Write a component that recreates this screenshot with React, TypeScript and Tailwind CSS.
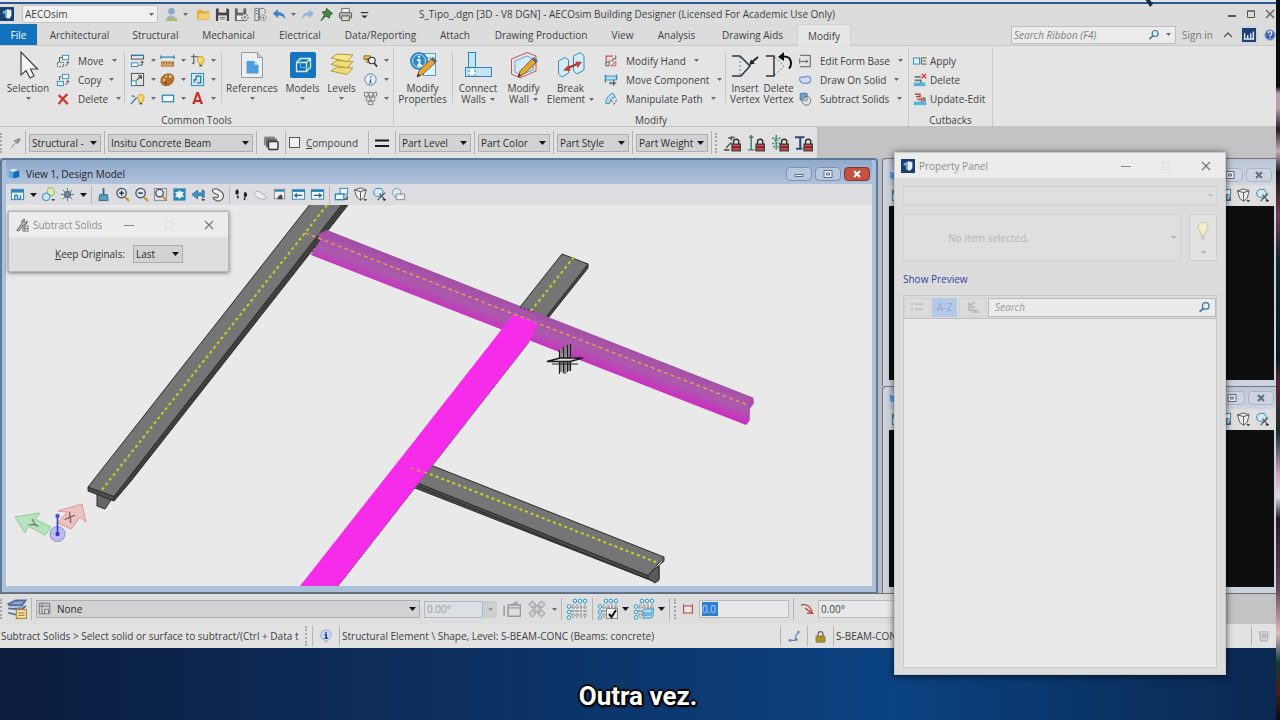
import type { ReactNode } from "react";

/* ---------- small building blocks ---------- */

const Svg = ({ s = 16, children }: { s?: number; children: ReactNode }) => (
  <svg width={s} height={s} viewBox={`0 0 ${s} ${s}`} fill="none" className="shrink-0" aria-hidden="true">{children}</svg>
);

const Caret = ({ dark = false }: { dark?: boolean }) => (
  <svg width={dark ? 7 : 5} height={dark ? 4 : 3} viewBox="0 0 6 4" preserveAspectRatio="none" className="shrink-0" aria-hidden="true">
    <path d="M0 0H6L3 4Z" fill={dark ? "#151515" : "#6b6b6b"} />
  </svg>
);

const Sep = () => <div className="w-px shrink-0 self-stretch bg-[#b4b4b4]" />;
const Grip = () => <div className="h-5 w-[3px] shrink-0 border-l-2 border-dotted border-[#a5a5a5]" />;

function Picker({ label, value, className, icon }: { label: string; value: string; className: string; icon?: ReactNode }) {
  return (
    <div className={`relative h-[18px] shrink-0 ${className}`}>
      <select aria-label={label} className={`block h-full w-full appearance-none border border-[#adadad] bg-[#d2d2d2] ${icon ? "pl-5" : "pl-0.5"} pr-3 text-[10px] leading-4 text-[#2b2b2b]`}>
        <option>{value}</option>
      </select>
      {icon && <span className="pointer-events-none absolute left-0.5 top-0.5">{icon}</span>}
      <span className="pointer-events-none absolute inset-y-0 right-1 flex items-center"><Caret dark /></span>
    </div>
  );
}

/* ---------- 16px icons ---------- */

const B = "#2a86b8";
const K = "#4a4a4a";

const lockBody = (
  <>
    <path d="M10 10V7.500a2.500 2.500 0 0 1 5 0V10" stroke="#333" strokeWidth="1.400" />
    <rect x="8.500" y="9.500" width="8" height="6.500" fill="#b9484c" stroke="#333" />
    <path d="M8.500 12.500h8" stroke="#5a2024" />
  </>
);

const gridBase = (
  <>
    <path d="M7 6v15M11 6v15M15 6v15M19 6v15M5 9h16M5 13h16M5 17h16" stroke="#888" strokeDasharray="2 1" />
    <g stroke="#2b95cf" fill="#e8f4fb">
      <circle cx="9" cy="3" r="1.800" /><circle cx="14" cy="3" r="1.800" /><circle cx="19" cy="3" r="1.800" />
      <circle cx="3" cy="8.500" r="1.800" /><circle cx="3" cy="14" r="1.800" /><circle cx="3" cy="19.500" r="1.800" />
    </g>
  </>
);

const bulb = (
  <>
    <path d="M11.500 3.500a3.700 3.700 0 0 1 2 6.700V12h-4v-1.800a3.700 3.700 0 0 1 2-6.700Z" fill="#f7d774" stroke="#d79b1e" />
    <path d="M10 13.500h3" stroke="#555" strokeWidth="1.500" />
  </>
);

const icons: Record<string, ReactNode> = {
  logo: <><rect width="16" height="16" fill="#15406f" /><path d="M3 5 8 2.500V13L5.500 11.500V7L3 8Z" fill="#7fa8d6" /><path d="M8 2.500 13 3.500V10L11 13H8Z" fill="#e9f0f8" /></>,
  user: <><circle cx="8" cy="4.500" r="3.500" fill="#8aa9cc" /><path d="M2 15c0-8 11-8 11 0Z" fill="#9ab6d4" /><path d="M1 15c2-4 6-4 13-3v3Z" fill="#a9bd6a" /></>,
  folder: <><path d="M1 5q0-2 2-2h3l1.500 1.500H13q1.500 0 1.500 2V12q0 1.500-1.500 1.500H3Q1 13.500 1 12Z" fill="#e2ab3b" /><path d="M3 7h12l-1.500 6H3Z" fill="#f3cf73" /></>,
  save: <><path d="M1 1.500h13L15 3v12H1Z" fill="#444" /><rect x="4" y="1" width="8" height="5" fill="#dcdcdc" /><rect x="3.500" y="9" width="9" height="6" fill="#efefef" /><path d="M5 11h6M5 13h6" stroke="#666" /></>,
  saveCog: <><path d="M1 1.500h12V15H1Z" fill="#666" /><rect x="4" y="1" width="6" height="5" fill="#dcdcdc" /><rect x="3" y="9" width="6" height="5" fill="#efefef" /><circle cx="11.500" cy="11" r="3.500" fill="#ddd" stroke="#555" strokeDasharray="2 1" /><circle cx="11.500" cy="11" r="1.200" fill="#666" /></>,
  docCog: <><path d="M2 1.500h4v13H2ZM7 1.500h4l2 2V7M7 2v12" stroke="#777" /><path d="M3 4h2M3 7h2" stroke="#2a86b8" /><circle cx="11" cy="11.500" r="3" fill="#ddd" stroke="#666" strokeDasharray="2 1" /><circle cx="11" cy="11.500" r="1" fill="#666" /></>,
  undo: <path d="M1 7 6.500 2.500V5.500C11 5.500 14 8 14 13 12 9.500 9.500 9 6.500 9v3Z" fill="#3c82c8" />,
  redo: <path d="M15 7 9.500 2.500V5.500C5 5.500 2 8 2 13 4 9.500 6.500 9 9.500 9v3Z" fill="#8fb6dc" />,
  pin: <><path d="M8 1.500 14.500 7 12 8 11 12 7.500 9.500 2 14.500 6 8.500 3.500 5.500 7.500 4.500Z" fill="#3f8a47" stroke="#2b5c32" /></>,
  printer: <><path d="M4 6V1.500h8V6" stroke="#666" fill="#eee" /><rect x="1.500" y="6" width="13" height="6" rx="1" fill="#b6b6b6" stroke="#555" /><rect x="4" y="9.500" width="8" height="5" fill="#cfe3c0" stroke="#555" /></>,
  more: <><path d="M4 6h8" stroke="#333" strokeWidth="1.300" /><path d="M4.500 9h7L8 12Z" fill="#333" /></>,
  move: <><rect x="7.500" y="1.500" width="7" height="5" stroke={B} fill="#f4fafc" /><rect x="1.500" y="9.500" width="7" height="5" stroke={K} strokeDasharray="2 1" /><path d="M4 9V4h3M10.500 13c2.500 0 3-1.500 3-4M12 10.500 13.500 8.500 15 10.500" stroke={K} /></>,
  copy: <><rect x="7.500" y="1.500" width="7" height="5" stroke={B} fill="#f4fafc" /><rect x="1.500" y="9.500" width="7" height="5" stroke={B} fill="#dff0f7" /><path d="M4 8V4h2M10.500 13c2.500 0 3-1.500 3-4M12 10.500 13.500 8.500 15 10.500" stroke={K} /></>,
  del: <path d="M3 3.500C6 6 10 10 13.500 14M13 2.500C9 6 5.500 10 3 14" stroke="#cf3530" strokeWidth="2.600" />,
  stretch: <><rect x="1.500" y="2.500" width="13" height="4" stroke={K} /><path d="M2 2.500h12" stroke={B} strokeWidth="1.500" /><rect x="1.500" y="10.500" width="7" height="4" stroke={B} fill="#fff" /><path d="M10 13h3V9M11.500 10.500 13 8.500l1.500 2" stroke={K} /></>,
  measure: <><path d="M1 4.500h14M1 2.500v4M15 2.500v4" stroke={B} strokeWidth="1.300" /><rect x="1.500" y="9.500" width="13" height="4.500" fill="#d9a86c" stroke="#a97534" /><path d="M4 10v2M7 10v2M10 10v2M13 10v2" stroke="#8a5c22" /></>,
  snapBulb: <><path d="M4 1v11M1 4h8M2 12l3-3" stroke={K} />{bulb}</>,
  scale: <><rect x="1.500" y="1.500" width="13" height="13" stroke={K} /><rect x="1.500" y="9.500" width="5" height="5" stroke={B} fill="#fff" /><path d="M7 9l5-5M8.500 4H12v3.500" stroke={K} strokeWidth="1.300" /></>,
  palette: <><path d="M9 2c5 0 6 3 5.500 6S11 14.500 6.500 14.500C3 14.500 1 12.500 1 9.500 1 5 5 2 9 2Z" fill="#b9702a" stroke="#8f531a" /><circle cx="11" cy="4.800" r="1.400" fill="#e8e8e8" /><circle cx="6.500" cy="5" r="1.200" fill="#f0c05a" /><circle cx="4" cy="8.500" r="1.200" fill="#efe2b8" /><circle cx="6" cy="11.500" r="1.200" fill="#6d3a0e" /></>,
  offset: <><rect x="1.500" y="1.500" width="13" height="13" fill="#cfe9f5" stroke={B} /><path d="M4.500 11.500v-3h2v-4h5v7H7.500" stroke="#246e97" strokeWidth="1.300" /></>,
  wandBulb: <><path d="M1 14 7 7M2 5l3 1" stroke="#4481b8" strokeWidth="1.600" />{bulb}</>,
  fence: <><rect x="2.500" y="4.500" width="12" height="7" fill="#eef8fc" stroke={B} strokeWidth="1.300" /></>,
  search3: <><path d="M1 3h7v4H1ZM4 6h6v4H4Z" fill="#edbb56" stroke="#9a6b1b" /><circle cx="9.500" cy="8" r="3.500" fill="#e7eef4" stroke="#333" strokeWidth="1.200" /><path d="M12 11l3 3.500" stroke="#333" strokeWidth="1.800" /></>,
  info: <><circle cx="8" cy="8" r="6" fill="#e8effa" stroke="#4d76bb" /><path d="M8.500 4.500v1.500M8.300 7.500 7.500 11.500h1.500" stroke="#2f5fae" strokeWidth="1.400" /></>,
  infoDrop: <><path d="M8 1a6 6 0 0 1 2 11.600L8 15.500 6 12.600A6 6 0 0 1 8 1Z" fill="#c9d8ee" stroke="#8ea6c8" /><path d="M8 3.500V5M6.500 6.500H8.200V10.500M6.500 10.500H10" stroke="#123b86" strokeWidth="1.600" /></>,
  keyboard: <><path d="M1.500 1.500h4v4h-4ZM6.500 1.500h4v4h-4ZM11.500 1.500h3v4h-3ZM3.500 6.500h4v4h-4ZM8.500 6.500h4v4h-4ZM5.500 11.500h5v3h-5Z" stroke="#777" fill="#eee" /></>,
  hand: <><path d="M2 2.500h8M2.500 2v7" stroke="#c0504d" strokeWidth="1.300" /><path d="M2 13.500V9.500h4v4ZM9.500 5.500h4V1.500" stroke={K} /><path d="M8 13.500h5.500v-5ZM5 8h6l-1.500-2" stroke="#c0504d" fill="#f3d4d2" /></>,
  moveComp: <><path d="M1.500 2v9M14.500 2v6" stroke={B} strokeWidth="1.400" /><rect x="2" y="3.500" width="12" height="4.500" fill="#b7dcee" stroke={B} /><path d="M11 8.500v6M8 11.500h6M7 10v3" stroke={K} strokeWidth="1.300" /></>,
  path: <><path d="M2 13C2 7 6 2.500 10.500 1.500L13 6C9 6.500 7 9 6.500 13Z" fill="#b9d9ec" stroke={B} /><path d="M8 9.500l4 4M14 8.500c0 3-1.500 5-4 6" stroke={K} strokeDasharray="3 1" /></>,
  formBase: <><path d="M2 1.500h12v13H2" stroke={K} /><path d="M3 8.500h8M9 6.500l2 2-2 2M2 5v6" stroke={K} /></>,
  drawSolid: <path d="M2 8C1 5 4 3.500 7 5c2-2 7-1.500 7.500 1 .5 3-1 5.500-4 5.500C7 12.500 3 11.500 2 8Z" fill="#cfdcf2" stroke="#6f8fc6" strokeWidth="1.400" />,
  subSolid: <><rect x="2.500" y="1.500" width="8" height="8" rx="1" fill="#6fa4d8" stroke="#3b6ea4" /><circle cx="9.500" cy="10" r="5" fill="#e4e4e4" stroke="#666" /><path d="M6 6.500h4.500V10H6Z" fill="#b6cfe8" stroke="#888" /></>,
  apply: <><rect x="0.500" y="4.500" width="7" height="7" fill="#d6ecf6" stroke={B} /><path d="M9.500 4.500h6M9.500 11.500h6M9.500 4.500v7M11 8h4" stroke={K} /></>,
  cutDel: <><path d="M2 4.500h7M2 8.500h7v3" stroke="#777" strokeWidth="2" /><rect x="1" y="11" width="13" height="4" fill="#54b4de" /><path d="M10 1l5 5M15 1l-5 5" stroke="#d03a34" strokeWidth="1.600" /></>,
  cutUpd: <><path d="M2 2.500h6v3H3.500M5 8.500h5v3M12.500 6v5" stroke="#b34a47" strokeWidth="1.700" /><rect x="1" y="11" width="14" height="4" fill="#54b4de" /><path d="M9 7h5v4" stroke="#666" /></>,
  pinGrey: <path d="M2 14 7 8M6 5l4 4 1-2.500L14 4 12 2 9 4Z" stroke="#777" fill="#999" strokeWidth="1.200" />,
  layersBox: <><rect x="1" y="1.500" width="11" height="9" rx="1" fill="#8b8b8b" /><rect x="3" y="3.500" width="11" height="9" rx="1" fill="#6a6a6a" /><rect x="5.500" y="6.500" width="9.500" height="8" rx="1" fill="#eee" stroke="#333" strokeWidth="1.400" /></>,
  equals: <path d="M1 5.500h14M1 11h14" stroke="#1a1a1a" strokeWidth="2.200" />,
  viewAttr: <><rect x="1.500" y="2.500" width="13" height="11" fill="#e8f4fa" stroke={B} /><path d="M2 4.500h12" stroke={B} strokeWidth="3" /><path d="M5 13V9.500q2-2 3 0V13M9 13q3 0 2-4" stroke={B} strokeWidth="1.500" /></>,
  style: <><rect x="7" y="1" width="7" height="8" rx="2" fill="#d8ecb4" stroke="#8fb85a" /><circle cx="5.500" cy="10.500" r="4" fill="#cfe4f2" stroke={B} /><path d="M11 13h4l-2 2Z" fill="#111" /></>,
  sun: <><circle cx="8" cy="8" r="3.500" fill="#6f8698" stroke="#4f6576" /><path d="M8 1v3M8 12v3M1 8h3M12 8h3M3 3l2 2M11 11l2 2M13 3l-2 2M3 13l2-2" stroke="#5a6b78" /></>,
  brush: <><path d="M8 1v7" stroke="#2f6f96" strokeWidth="2" /><path d="M4 8h8l1 6.500H3Z" fill="#5a9cc0" stroke="#3a6b86" /></>,
  zoomIn: <><circle cx="7" cy="6.500" r="5" fill="#d6e6f0" stroke="#3c4b57" strokeWidth="1.300" /><path d="M7 4v5M4.500 6.500h5" stroke="#222" strokeWidth="1.400" /><path d="M10.500 10.500 15 15" stroke="#c9913a" strokeWidth="2.400" /></>,
  zoomOut: <><circle cx="7" cy="6.500" r="5" fill="#d6e6f0" stroke="#3c4b57" strokeWidth="1.300" /><path d="M4.500 6.500h5" stroke="#222" strokeWidth="1.400" /><path d="M10.500 10.500 15 15" stroke="#c9913a" strokeWidth="2.400" /></>,
  zoomWin: <><rect x="1.500" y="1.500" width="13" height="13" stroke="#888" /><circle cx="7" cy="6.500" r="4" fill="#e4edf2" stroke="#3c4b57" strokeWidth="1.300" /><path d="M10 9.500 14 14" stroke="#c9913a" strokeWidth="2.200" /></>,
  fit: <><rect x="1.500" y="1.500" width="13" height="13" fill={B} /><path d="M8 3l1.500 2.500H13L11 8l2 2.500H9.500L8 13l-1.500-2.500H3L5 8 3 5.500h3.500Z" fill="#eef8fc" /><path d="M5 5h6v6H5Z" fill="#eef8fc" /></>,
  rotate: <><path d="M1 8l6-4.500v3h5V3l2 1v7h-2V9H7v3.500Z" fill="#4396d0" stroke="#2c6c9c" /><path d="M11 13h4l-2 2Z" fill="#111" /></>,
  pan: <path d="M3 5C1 2 7 1 9 3c4 2 6 5 5 8-1 4-6 5-8 3-3-1-3-3-1-3 2 1 4 0 4-2C7 7 5 8 3 5Z" fill="#f0f0f0" stroke="#555" strokeWidth="1.200" />,
  walk: <><path d="M4 2q-3 1-2.500 5 1 2 3 1Q6 5 4 2ZM3 9.500l2-.5v3q-2 1-2-2.500ZM11.500 5Q15 6 13.500 10q-2 1.500-3-.5Q10 7 11.500 5ZM10.500 11l2 .5q0 3-2 2.500Z" fill="#222" /></>,
  fly: <path d="M1 7Q3 3 7 5l7 5q1 3-3 3Q3 12 1 7Z" fill="#eee" stroke="#aaa" />,
  navigate: <><rect x="2.500" y="2.500" width="11" height="10" fill="#eee" stroke="#888" /><path d="M3 4h10" stroke={B} strokeWidth="2" /><path d="M6 11l3-3 2 1v4H6Z" fill="#445" /></>,
  prev: <><rect x="1.500" y="3" width="13" height="10" fill="#f4fafc" stroke={B} /><path d="M1 4h14" stroke={B} strokeWidth="2.500" /><path d="M4 9h8M6.500 7 4 9l2.500 2" stroke="#285f86" strokeWidth="1.300" /></>,
  next: <><rect x="1.500" y="3" width="13" height="10" fill="#f4fafc" stroke={B} /><path d="M1 4h14" stroke={B} strokeWidth="2.500" /><path d="M4 9h8M9.500 7l2.500 2-2.500 2" stroke="#285f86" strokeWidth="1.300" /></>,
  copyView: <><rect x="6.500" y="1.500" width="8" height="6" fill="#f4fafc" stroke={B} /><rect x="1.500" y="7.500" width="9" height="6" fill="#f4fafc" stroke={B} strokeWidth="1.400" /><path d="M14 9v4h-3" stroke="#333" strokeWidth="1.300" /></>,
  clipVol: <><path d="M1.500 3 8 1l6 2-2 8-4 3-4-3ZM1.500 3 8 5l6-2M8 5v9" stroke="#555" fill="#eee" /><path d="M11 13h4l-2 2Z" fill="#111" /></>,
  clip: <><path d="M2 4 5 1.500h5L12 5l-2 5H5L2 8Z" fill="#d6e9f4" stroke={B} /><path d="M6 14l8-8M8 7l6 7" stroke="#555" strokeWidth="1.400" /><path d="M11 13h4l-2 2Z" fill="#111" /></>,
  clipMask: <><circle cx="6" cy="6" r="4.500" fill="#d8ebf5" stroke="#6b9cb8" /><path d="M5.500 7.500h9v6h-9Z" fill="#eee" stroke="#888" /></>,
  wrench: <><path d="M2 14 8 6q-1-4 3-4.500L10 4l2 1 2-1.500q0 4-4 4.500L4 15Z" fill="#bbb" stroke="#555" /><rect x="9" y="9" width="6" height="6" fill="#ddd" stroke="#777" /><path d="M11 9v6M9 12h6" stroke="#777" /></>,
  levelStack: <><path d="M1 4l6-3h8l-3 4H2ZM1 7.500l11 1 3-3M1 11l8 2" stroke="#51699c" fill="#8aa0cd" strokeWidth="1.400" /><rect x="7.500" y="8.500" width="8" height="7" fill="#f6e4a8" stroke="#a98c3f" /><path d="M9 11h5M9 13h5" stroke="#a98c3f" /></>,
  acs: <><path d="M1.500 1.500h13v13h-13ZM1.500 5h13M5 1.500v13M8 14V9h5v5" stroke="#666" /></>,
  calendar: <><path d="M4.500 4.500h11v10h-11ZM5 7h10M7 4.500l5-2.500 1 2.500M1 5v9" stroke="#999" strokeWidth="1.300" /></>,
  cross: <><path d="M1 4l3-3 3 3-3 3ZM9 4l3-3 3 3-3 3ZM5 8l3-3 3 3-3 3ZM1 12l3-3 3 3-3 3ZM9 12l3-3 3 3-3 3Z" stroke="#a6a6a6" fill="#d4d4d4" /></>,
  rect: <><path d="M3 2v12M13 2v12" stroke="#777" /><rect x="3" y="4.500" width="10" height="8" fill="#f3e3e3" stroke="#b84b48" strokeWidth="1.200" /></>,
  angle: <><path d="M2 3h4q7 2 8 10M6 7l8 6H8" stroke="#b84b48" strokeWidth="1.500" /><path d="M2 2v3" stroke="#777" /></>,
  snapNode: <><path d="M3 13h7V8l3-4" stroke="#5b88b8" strokeWidth="1.400" /><circle cx="3.500" cy="13" r="1.600" fill="#5b88b8" /><circle cx="13" cy="3.500" r="1.800" fill="#7aa3cc" /><circle cx="10.500" cy="12" r="1.600" fill="#5b88b8" /></>,
  padlock: <><path d="M5 8V5a3 3 0 0 1 6 0v3" stroke="#666" strokeWidth="1.500" /><rect x="2.500" y="7.500" width="11" height="7.500" rx="1" fill="#b8a42c" stroke="#75681c" /><path d="M3 10h10M3 12.500h10" stroke="#8d7d1f" /></>,
  doc: <><path d="M2 2.500h11v9l-1 3H3Z" stroke="#999" fill="#d8d8d8" /><circle cx="8" cy="8" r="2.500" stroke="#888" /></>,
  bars: <><rect width="16" height="16" fill="#1b3f73" /><path d="M3 12V6M6.500 12V8M10 12V6M13 12V4M2 12.500h12" stroke="#e6ecf4" strokeWidth="1.600" /></>,
  help: <><circle cx="8" cy="8" r="7" fill="#3f62b5" stroke="#9fb0dc" strokeWidth="1.500" /><path d="M5.500 6q0-2.500 2.500-2.500T10.500 6Q10.500 7.500 8 8.500V10M8 11.500V13" stroke="#fff" strokeWidth="1.500" /></>,
  mag: <><circle cx="9.500" cy="6" r="4" stroke="#357a9c" strokeWidth="1.600" /><path d="M6.500 9 2 13.500" stroke="#357a9c" strokeWidth="2.200" /></>,
  grouped: <><path d="M2 5h2M2 10h2M6 5h3M6 10h3M10 5h4M10 10h4" stroke="#b5b5b5" strokeWidth="1.400" /></>,
  tree: <><path d="M3 4l3 2 4-3M4 5v6h8M5 8h5M7 13h7" stroke="#b2b2b2" strokeWidth="1.300" /></>,
  book: <><path d="M1 3l6 2v9l-6-2Z" fill="#5aa7e2" /><path d="M15 3 7 5v9l8-2Z" fill="#1668b4" /><path d="M2 3l6-2 5 2-6 2Z" fill="#d8ecfa" /></>,
};

const Icon = ({ n, size = 14 }: { n: string; size?: number }) => (
  <svg width={size} height={size} viewBox="0 0 16 16" fill="none" className="shrink-0" aria-hidden="true">{icons[n]}</svg>
);

/* ---------- 28px ribbon icons ---------- */

const pencil = <><path d="M8 26 10 20 22 8 26 12 14 23Z" fill="#e5a63a" stroke="#8b5f1c" /><path d="M22 8 24 6 28 10 26 12Z" fill="#5b6a8a" /><path d="M8 26 9 22.500 11.500 25Z" fill="#333" /></>;

const bigIcons: Record<string, ReactNode> = {
  cursor: <path d="M7 1V24L12 19.500 16 27 20 25 16.500 18H23.500Z" fill="#f4f4f4" stroke="#444" strokeWidth="1.200" />,
  references: <><path d="M3.500 1.500h16l5 5v20h-21Z" fill="#eceff1" stroke="#9a9a9a" /><path d="M19.500 1.500v5h5" fill="#c4c4c4" stroke="#9a9a9a" /><path d="M8.500 10h8l4 4v8.500h-12Z" fill="#4d9fe0" /><path d="M16.500 10v4h4" fill="#b9dcf6" /></>,
  models: <><rect x="1" y="1" width="26" height="26" rx="2" fill="#1574c0" /><path d="M7.500 11.500h10v9h-10ZM7.500 11.500 11 7.500h10.500v9l-4 4M17.500 11.500l4-4" stroke="#d9ecfa" strokeWidth="1.300" /><path d="M11.500 8v8.500h9" stroke="#6aaede" /></>,
  levels: <g fill="#efdb79" stroke="#b39a3a"><path d="M3 20 9 16l16 1-6 6.500Z" /><path d="M3 13.500 9 9.500l16 1-6 6.500Z" /><path d="M3 7 9 3l16 1-6 6.500Z" fill="#f5e690" /></g>,
  modProps: <><rect x="14.500" y="2.500" width="12" height="22" fill="#e6f2fa" stroke="#4aa0d0" /><path d="M18 7h7M18 11h7" stroke="#4aa0d0" /><circle cx="10" cy="10" r="9" fill="#2b87c6" /><circle cx="10" cy="10" r="6.500" stroke="#cfe7f6" /><path d="M10 5v2M8 9h2.500v5M8 14.500h5" stroke="#fff" strokeWidth="1.800" />{pencil}</>,
  connect: <><rect x="4.500" y="1.500" width="7" height="24" fill="#c5e5f4" stroke={B} /><rect x="1.500" y="16.500" width="26" height="9" fill="#c5e5f4" stroke={B} /><rect x="5" y="17" width="6" height="8" fill="#f2fafd" stroke={B} strokeDasharray="2 2" /></>,
  modWall: <><path d="M1.500 8 17 1.500 26 5V20L10 27 1.500 23Z" stroke="#d0504c" /><path d="M5 10 17 5 23 8V19L10 24 5 21Z" fill="#d4ecf7" stroke="#5aa9d0" />{pencil}</>,
  breakEl: <><path d="M1.500 10 8 6.500 11.500 9V22L5 26 1.500 23ZM16.500 5 23 1.500 27 4.500V19L20 23 16.500 20Z" fill="#d4ecf7" stroke="#2f8fc0" /><path d="M9 18 21 12.500" stroke="#a8332f" strokeWidth="2" /><path d="M6 19.500 12 13.500 13.500 20ZM25 11 18.500 10.500 20.500 17Z" fill="#c23c38" /></>,
  insV: <><path d="M1 5h8l10 10-9 10H1" stroke="#333" strokeWidth="1.500" /><path d="M9 6v18" stroke="#3f93bd" strokeDasharray="2 2" /><path d="M27 6 21 11" stroke="#222" strokeWidth="1.800" /><path d="M18 14 20 8.500 24 12.500Z" fill="#222" /></>,
  delV: <><path d="M1 5h8v20H1" stroke="#333" strokeWidth="1.500" /><path d="M10 6l9 9-9 9" stroke="#3f93bd" strokeDasharray="2 2" /><path d="M17 5.500q9-1 9 7 0 3-2 5" stroke="#111" strokeWidth="2" /><path d="M13 6l6-5v9Z" fill="#111" /></>,
};

function BigTool({ icon, lines, w, caret }: { icon: string; lines: string[]; w: string; caret?: "below" | "inline" }) {
  return (
    <button className={`flex shrink-0 flex-col items-center text-[10px] leading-[11px] ${w}`}>
      <span className="mb-1 h-7"><Svg s={28}>{bigIcons[icon]}</Svg></span>
      {lines.map((l, i) => (
        <span key={l} className="flex items-center gap-1 whitespace-nowrap">
          {l}{caret === "inline" && i === lines.length - 1 && <Caret />}
        </span>
      ))}
      {caret === "below" && <span className="flex h-[9px] items-center"><Caret /></span>}
    </button>
  );
}

function SmallTool({ icon, label, caret = true, tight = false }: { icon: string; label: string; caret?: boolean; tight?: boolean }) {
  return (
    <button className={`flex h-[19px] items-center whitespace-nowrap text-[10px] leading-4 ${tight ? "gap-[3px]" : "gap-2"}`}>
      <Icon n={icon} />{label}{caret && <Caret />}
    </button>
  );
}

const IconCaret = ({ icon }: { icon: string }) => (
  <button aria-label={icon} className="flex h-[19px] w-[30px] items-center gap-1.5">
    <Icon n={icon} size={15} /><Caret />
  </button>
);

const RibbonSep = () => <div className="mx-px h-[52px] w-px shrink-0 bg-[#c6c6c6]" />;

function RibbonGroup({ name, w, children }: { name: string; w: string; children: ReactNode }) {
  return (
    <section className={`flex shrink-0 flex-col border-r border-[#c9c9c9] ${w}`}>
      <div className="flex h-[68px] items-start pt-1">{children}</div>
      <h2 className="text-center text-[10px] leading-3">{name}</h2>
    </section>
  );
}

/* ---------- header ---------- */

const TABS = [
  { name: "Architectural", w: "w-[83px]" },
  { name: "Structural", w: "w-[69px]" },
  { name: "Mechanical", w: "w-[77px]" },
  { name: "Electrical", w: "w-[66px]" },
  { name: "Data/Reporting", w: "w-[95px]" },
  { name: "Attach", w: "w-[54px]" },
  { name: "Drawing Production", w: "w-[118px]" },
  { name: "View", w: "w-[45px]" },
  { name: "Analysis", w: "w-[63px]" },
  { name: "Drawing Aids", w: "w-[89px]" },
];

function TitleBar() {
  return (
    <header className="flex h-5 items-center">
      <div className="flex w-[411px] shrink-0 items-center">
        <Icon n="logo" />
        <div className="relative ml-2 mr-1.5 h-[18px] w-[136px]">
          <select aria-label="Workflow" className="block h-full w-full appearance-none border border-[#c4c4c4] bg-[#f0f0f0] pl-0.5 text-[10px] leading-4">
            <option>AECOsim</option>
          </select>
          <span className="pointer-events-none absolute inset-y-0 right-1 flex items-center"><Caret /></span>
        </div>
        <button aria-label="User" className="mr-2 flex items-center gap-1"><Icon n="user" size={15} /><Caret /></button>
        <div className="flex items-center gap-1">
          {["folder", "save", "saveCog", "docCog", "undo"].map(n => (
            <button key={n} aria-label={n}><Icon n={n} size={15} /></button>
          ))}
        </div>
        <span className="mx-1"><Caret /></span>
        <div className="flex items-center gap-1">
          {["redo", "pin", "printer", "more"].map(n => (
            <button key={n} aria-label={n}><Icon n={n} size={15} /></button>
          ))}
        </div>
      </div>
      <h1 className="flex-1 whitespace-nowrap pl-2 text-[10px] leading-4">S_Tipo_.dgn [3D - V8 DGN] - AECOsim Building Designer (Licensed For Academic Use Only)</h1>
      <div className="flex items-center gap-[9px] pr-px">
        <button aria-label="Minimize"><Svg s={10}><path d="M1 7h8" stroke="#555" strokeWidth="2" /></Svg></button>
        <button aria-label="Maximize"><Svg s={10}><path d="M1.500 2h7v6.500h-7ZM1 2h8" stroke="#555" /></Svg></button>
        <button aria-label="Close"><Svg s={10}><path d="M1 1l8 8M9 1 1 9" stroke="#666" strokeWidth="1.500" /></Svg></button>
      </div>
    </header>
  );
}

function TabBar() {
  return (
    <nav className="flex h-[22px] items-stretch border-b border-[#c8c8c8] text-[10px] leading-4">
      <button className="mr-px w-[37px] bg-[#1272be] text-white">File</button>
      {TABS.map(t => <button key={t.name} className={`shrink-0 whitespace-nowrap ${t.w}`}>{t.name}</button>)}
      <button className="-mb-px h-[22px] w-[54px] border border-b-0 border-[#cfcfcf] bg-[#e6e6e6]">Modify</button>
      <div className="ml-auto flex items-center text-[#777]">
        <label className="mr-1.5 flex h-[18px] w-[165px] items-center gap-1.5 border border-[#bdbdbd] bg-[#ececec] pl-0.5 pr-1">
          <input aria-label="Search Ribbon" placeholder="Search Ribbon (F4)" className="min-w-0 flex-1 bg-transparent italic placeholder:text-[#808080]" />
          <Icon n="mag" size={12} /><Caret />
        </label>
        <a href="#signin" className="w-[40px]">Sign in</a>
        <button aria-label="Collapse ribbon" className="mr-1.5"><Svg s={12}><path d="M2 8l4-4 4 4" stroke="#555" strokeWidth="1.300" /></Svg></button>
        <button aria-label="Statistics" className="mr-1.5 bg-[#cdd6e2] p-0.5"><Icon n="bars" /></button>
        <button aria-label="Help"><Icon n="help" size={12} /></button>
      </div>
    </nav>
  );
}

function Ribbon() {
  return (
    <div className="flex h-[81px] items-stretch border-b border-[#c4c4c4] bg-[#e4e4e4] pt-px">
      <RibbonGroup name="Common Tools" w="w-[394px]">
        <BigTool icon="cursor" lines={["Selection"]} w="w-[56px]" caret="below" />
        <div className="w-[67px]">
          <SmallTool icon="move" label="Move" />
          <SmallTool icon="copy" label="Copy" />
          <SmallTool icon="del" label="Delete" />
        </div>
        <RibbonSep />
        <div className="grid w-[94px] grid-cols-3 pl-1">
          {["stretch", "measure", "snapBulb", "scale", "palette", "offset", "wandBulb", "fence"].map(n => <IconCaret key={n} icon={n} />)}
          <button aria-label="Place Text" className="flex h-[19px] w-[30px] items-center gap-1.5">
            <span className="w-[15px] text-center font-[Roboto] text-base font-bold leading-4 text-[#c2302c]">A</span><Caret />
          </button>
        </div>
        <RibbonSep />
        <BigTool icon="references" lines={["References"]} w="w-[58px]" caret="below" />
        <BigTool icon="models" lines={["Models"]} w="w-[43px]" caret="below" />
        <BigTool icon="levels" lines={["Levels"]} w="w-[35px]" caret="below" />
        <div className="pl-1">
          {["search3", "info", "keyboard"].map(n => <IconCaret key={n} icon={n} />)}
        </div>
      </RibbonGroup>

      <RibbonGroup name="Modify" w="w-[515px]">
        <BigTool icon="modProps" lines={["Modify", "Properties"]} w="w-[57px]" />
        <RibbonSep />
        <BigTool icon="connect" lines={["Connect", "Walls"]} w="w-[48px]" caret="inline" />
        <BigTool icon="modWall" lines={["Modify", "Wall"]} w="w-[43px]" caret="inline" />
        <BigTool icon="breakEl" lines={["Break", "Element"]} w="w-[51px]" caret="inline" />
        <div className="w-[128px] pl-2">
          <SmallTool icon="hand" label="Modify Hand" />
          <SmallTool icon="moveComp" label="Move Component" />
          <SmallTool icon="path" label="Manipulate Path" />
        </div>
        <RibbonSep />
        <BigTool icon="insV" lines={["Insert", "Vertex"]} w="w-[36px]" />
        <BigTool icon="delV" lines={["Delete", "Vertex"]} w="w-[31px]" />
        <div className="pl-1">
          <SmallTool icon="formBase" label="Edit Form Base" />
          <SmallTool icon="drawSolid" label="Draw On Solid" />
          <SmallTool icon="subSolid" label="Subtract Solids" />
        </div>
      </RibbonGroup>

      <RibbonGroup name="Cutbacks" w="w-[84px]">
        <div className="pl-1">
          <SmallTool icon="apply" label="Apply" caret={false} tight />
          <SmallTool icon="cutDel" label="Delete" caret={false} tight />
          <SmallTool icon="cutUpd" label="Update-Edit" caret={false} tight />
        </div>
      </RibbonGroup>
    </div>
  );
}

function AttributesBar() {
  return (
    <div className="flex h-[31px] bg-[#c3c3c3]">
      <div className="flex items-center gap-[3px] bg-[#e1e1e1] py-1">
        <Grip />
        <button aria-label="Pin" className="w-4 pl-1"><Icon n="pinGrey" size={12} /></button>
        <Sep /><Picker label="Family" value="Structural -" className="w-[72px]" />
        <Sep /><Picker label="Part" value="Insitu Concrete Beam" className="w-[145px]" />
        <Sep /><button aria-label="Compound parts" className="px-[3px]"><Icon n="layersBox" size={16} /></button>
        <Sep />
        <label className="flex w-[76px] items-center gap-1.5 text-[10px] leading-4">
          <input type="checkbox" className="h-[11px] w-[11px] shrink-0 appearance-none border border-[#555] bg-[#f2f2f2]" />
          <span><u>C</u>ompound</span>
        </label>
        <Sep /><button aria-label="Equals" className="px-0.5"><Icon n="equals" size={16} /></button>
        <Sep /><Picker label="Level" value="Part Level" className="w-[72px]" />
        <Sep /><Picker label="Color" value="Part Color" className="w-[72px]" />
        <Sep /><Picker label="Style" value="Part Style" className="w-[72px]" />
        <Sep /><Picker label="Weight" value="Part Weight" className="w-[72px]" />
        <Sep /><Grip />
        <div className="flex items-center gap-1 px-0.5">
          {[
            <path key="a" d="M1 15h5M3 13l5-5M8 2v4M5 4l6-1" stroke="#555" strokeWidth="1.500" />,
            <path key="b" d="M2 3h4M4 3v12M1 15h6M4 15V1" stroke="#3a7a62" strokeWidth="1.300" />,
            <path key="c" d="M1 4h8M1 9h8M5 1v14M2 12h5M3 6h4" stroke="#3a8a72" strokeWidth="1.500" strokeDasharray="2 1" />,
            <path key="d" d="M0 3h9M5 3v10M1 14h6" stroke="#2a4a80" strokeWidth="2" />,
          ].map((shape, i) => (
            <button key={i} aria-label={`Lock ${i + 1}`}>
              <svg width="20" height="18" viewBox="0 0 19 17" fill="none">{shape}{lockBody}</svg>
            </button>
          ))}
        </div>
      </div>
    </div>
  );
}

/* ---------- views ---------- */

function WindowButtons({ active = false }: { active?: boolean }) {
  return (
    <div className="flex gap-[3px]">
      {["Minimize", "Restore", "Close"].map(n => (
        <button key={n} aria-label={n}
          className={`flex h-3.5 w-[26px] items-center justify-center rounded-sm border ${active && n === "Close" ? "border-[#7c3a33] bg-[#c4513f]" : active ? "border-[#7d90ad] bg-[#b6c7df]" : "border-[#a9b3c4] bg-[#cdd4e0]"}`}>
          <Svg s={10}>
            {n === "Minimize" && <path d="M1 5.500h8v2H1Z" stroke="#5d6c82" fill="#eef2f8" />}
            {n === "Restore" && <path d="M1 1.500h8v7H1ZM3.500 4h3v2h-3Z" stroke="#5d6c82" fill="#eef2f8" />}
            {n === "Close" && <path d="M2 2l6 6M8 2 2 8" stroke={active ? "#fff" : "#5d6c82"} strokeWidth="2" />}
          </Svg>
        </button>
      ))}
    </div>
  );
}

const ViewTool = ({ n }: { n: string }) => (
  <button aria-label={n} className="flex w-[19px] shrink-0 justify-center"><Icon n={n} size={15} /></button>
);

const ViewSep = () => <div className="mx-0.5 h-[18px] w-px shrink-0 bg-[#b8b8b8]" />;
const ViewCaret = () => <span className="flex w-3 justify-center"><Caret dark /></span>;

function Drawing() {
  return (
    <svg viewBox="6 205 866 381" preserveAspectRatio="xMinYMin meet" className="absolute inset-0 h-full w-full" role="img" aria-label="Structural beams">
      <defs>
        <linearGradient id="cut" gradientUnits="userSpaceOnUse" x1="540" y1="313" x2="529" y2="342">
          <stop offset="0" stopColor="#a44fa6" />
          <stop offset="0.550" stopColor="#ab5aac" />
          <stop offset="1" stopColor="#cc2fc2" />
        </linearGradient>
      </defs>

      {/* left beam */}
      <g stroke="#2c2c2c" strokeLinejoin="round">
        <path d="M341 205H348L131 481 114 501 112 496Z" fill="#3f3f3f" />
        <path d="M97 492V506L105 509 111 500V495Z" fill="#666" />
        <path d="M88 487V491L114 501V496Z" fill="#4c4c4c" />
        <path d="M311 203 88 487 114 496.500 343 203Z" fill="#757575" />
      </g>
      <path d="M327 205 101 491" stroke="#c4d321" strokeWidth="2" strokeDasharray="3 3" />

      {/* stub behind the crossing */}
      <g stroke="#2c2c2c" strokeLinejoin="round">
        <path d="M588 264V268L549 317H540L584 264Z" fill="#444" />
        <path d="M562 254 588 264 546 317 520 307Z" fill="#757575" />
      </g>

      {/* beam being cut */}
      <path d="M327 230 753 397.500 754 403 749 410V420L746 425 311 255 320 240 318 234Z" fill="url(#cut)" />
      <path d="M753 398 749 409V420L746 424" stroke="#b244b0" strokeWidth="1.500" fill="none" />
      <path d="M320 240 311 254M520 307l15 5" stroke="#333" strokeDasharray="2 2" />
      <path d="M574 257 530 312" stroke="#c4d321" strokeWidth="2" strokeDasharray="3 3" />
      <path d="M305 233 748 405" stroke="#e39a5e" strokeWidth="1.500" strokeDasharray="4 3" />

      {/* lower beam */}
      <g stroke="#2c2c2c" strokeLinejoin="round">
        <path d="M415 482V488L655 582 659 579V566L647 575Z" fill="#4a4a4a" />
        <path d="M664 557V561L657 567 648 575V578L655 583 659 580V566" fill="#5a5a5a" />
        <path d="M428 464 664 557 648 575.500 415 482Z" fill="#757575" />
        <path d="M415 485 648 579" />
      </g>
      <path d="M430 474 658 563" stroke="#c4d321" strokeWidth="2" strokeDasharray="3 3" />

      {/* selected beam */}
      <path d="M513 315 537 323 536 328 529 342 338 586H300L415 440Z" fill="#f62cea" />
      <path d="M529 342 338 586" stroke="#b03ab0" strokeWidth="1" />
      <path d="M410 468 430 474" stroke="#e39a5e" strokeWidth="1.500" strokeDasharray="4 3" />

      {/* view triad */}
      <path d="M15 517 40 513 35 519 51 527 45 535 28 526 25 533Z" fill="#b9e3bf" stroke="#8ccb96" />
      <path d="M58 511 82 504 86 522 80 517 71 529 58 523 67 512Z" fill="#ecc3c1" stroke="#dc9896" />
      <text x="30" y="529" fontSize="13" fill="#5a7a5e" fontFamily="Lato, sans-serif" transform="rotate(-60 34 524)">Y</text>
      <text x="66" y="522" fontSize="13" fill="#7a5a5a" fontFamily="Lato, sans-serif" transform="rotate(30 70 517)">X</text>
      <circle cx="57.500" cy="534" r="7.500" fill="#bdbdf0" stroke="#8a8ad8" />
      <path d="M57.500 515V534" stroke="#3a3ac0" strokeWidth="1.600" />
      <circle cx="57.500" cy="516" r="2.200" fill="#5050d0" /><circle cx="57.500" cy="534" r="2.200" fill="#3a3ac0" />

      {/* crosshair cursor */}
      <g stroke="#1c1c1c">
        <path d="M561 349V372M565 347V374M569 345V371" stroke="#8a8a8a" strokeWidth="3" />
        <path d="M559.500 350V374M563.500 347V373M567.500 345V372M570.500 344V371" strokeWidth="1.200" />
        <path d="M547 361.500 560 358H583L570 361.500Z" fill="#ddd" strokeWidth="1.500" />
        <path d="M552 364h26" strokeWidth="1" />
      </g>
    </svg>
  );
}

function MainView() {
  return (
    <section className="flex min-w-0 flex-[866] flex-col rounded-t border-2 border-b border-[#5f7896] bg-[#abc0da] px-1 pb-1.5">
      <div className="flex h-6 shrink-0 items-center bg-linear-to-b from-[#8fa9cc] to-[#b0c3dc] px-0.5 pt-1 text-[10px] leading-4 text-[#222]">
        <Icon n="book" size={12} />
        <h2 className="ml-1.5 flex-1">View 1, Design Model</h2>
        <WindowButtons active />
      </div>
      <div className="flex h-[21px] shrink-0 items-center bg-[#dddce0] pl-0.5">
        <ViewTool n="viewAttr" /><ViewCaret /><ViewTool n="style" /><ViewTool n="sun" /><ViewCaret />
        <ViewSep />
        {["brush", "zoomIn", "zoomOut", "zoomWin", "fit", "rotate", "pan"].map(n => <ViewTool key={n} n={n} />)}
        <ViewSep />
        {["walk", "fly", "navigate", "prev", "next"].map(n => <ViewTool key={n} n={n} />)}
        <ViewSep />
        {["copyView", "clipVol", "clip", "clipMask"].map(n => <ViewTool key={n} n={n} />)}
      </div>
      <div className="relative flex-1 bg-[#e9e9e9]"><Drawing /></div>
    </section>
  );
}

function SideView({ name, size, bar }: { name: string; size: string; bar: string }) {
  return (
    <section aria-label={name} className={`flex flex-col rounded-tl border-l border-t border-[#6b7583] bg-[#cdd3de] pb-1.5 pl-1.5 ${size}`}>
      <div className={`flex shrink-0 items-center justify-between bg-linear-to-b from-[#bcc6d6] to-[#cfd5e0] ${bar}`}>
        <Icon n="book" size={12} />
        <WindowButtons />
      </div>
      <div className="flex h-[21px] shrink-0 items-center justify-between bg-[#dedede] pr-1">
        <ViewTool n="viewAttr" />
        <span className="flex"><ViewTool n="copyView" /><ViewTool n="clipVol" /><ViewTool n="clip" /></span>
      </div>
      <div className="mr-0.5 flex-1 bg-[#0e0e0f]" />
    </section>
  );
}

/* ---------- floating dialogs ---------- */

function DialogTitle({ icon, title, gap }: { icon: string; title: string; gap: string }) {
  return (
    <div className="flex h-[25px] items-center bg-[#ececec] px-1.5 text-[10px] leading-4 text-[#8d8d8d]">
      <Icon n={icon} />
      <h2 className="ml-1 flex-1">{title}</h2>
      <div className={`flex items-center ${gap}`}>
        <button aria-label="Minimize"><Svg s={10}><path d="M0 5.500h10" stroke="#888" /></Svg></button>
        <button aria-label="Maximize"><Svg s={10}><path d="M1.500 1.500h7v7h-7Z" stroke="#dcdcdc" /></Svg></button>
        <button aria-label="Close"><Svg s={10}><path d="M1 1l8 8M9 1 1 9" stroke="#777" strokeWidth="1.200" /></Svg></button>
      </div>
    </div>
  );
}

function SubtractSolids() {
  return (
    <section className="absolute left-2 top-[211px] w-[221px] border border-[#b5b5b5] bg-[#dedede] shadow-[0_1px_4px_rgba(0,0,0,0.5)]">
      <DialogTitle icon="wrench" title="Subtract Solids" gap="mr-2 gap-[30px]" />
      <div className="flex h-[34px] items-center pl-[46px] text-[10px] leading-4 text-[#333]">
        <span className="mr-2"><u>K</u>eep Originals:</span>
        <Picker label="Keep Originals" value="Last" className="w-[50px]" />
      </div>
    </section>
  );
}

function PropertyPanel() {
  return (
    <section className="absolute right-[50px] top-[152px] flex h-[523px] w-[332px] flex-col border border-[#c9c9c9] bg-[#dcdcdc] text-[10px] leading-4 shadow-[0_1px_7px_rgba(0,0,0,0.7)]">
      <DialogTitle icon="logo" title="Property Panel" gap="mr-2 gap-[30px]" />
      <div className="flex flex-1 flex-col px-2 pb-1.5 pt-2">
        <div className="relative h-[19px]">
          <select aria-label="Item type" disabled className="block h-full w-full appearance-none border border-[#d0d0d0] bg-[#dfdfdf]"><option></option></select>
          <span className="pointer-events-none absolute inset-y-0 right-1 flex items-center opacity-30"><Caret /></span>
        </div>
        <div className="mt-[9px] flex h-[47px] gap-2">
          <button className="flex flex-1 items-center justify-between border border-[#d0d0d0] bg-[#dfdfdf] pl-11 pr-1 text-[#b5b5b5]">
            No item selected.<span className="opacity-40"><Caret /></span>
          </button>
          <button aria-label="Tips" className="flex w-7 flex-col items-center justify-between border border-[#cdcdcd] bg-[#e2e2e2] py-1.5">
            <svg width="14" height="20" viewBox="0 0 14 20" fill="none">
              <path d="M7 1a5 5 0 0 1 3 9l-1 4H5l-1-4A5 5 0 0 1 7 1Z" fill="#f1efcb" stroke="#c7c5a8" />
              <path d="M5 16h4M5.500 18h3" stroke="#b9b9b9" />
            </svg>
            <span className="opacity-40"><Caret /></span>
          </button>
        </div>
        <a href="#preview" className="mt-2.5 font-medium text-[#2c479c]">Show Preview</a>
        <div className="mt-2 flex flex-1 flex-col border border-[#cacaca]">
          <div className="flex h-[23px] items-center gap-0.5 border-b border-[#bdbdbd]">
            <button aria-label="Grouped" className="flex h-[19px] w-[26px] items-center justify-center border border-[#d2d2d2]"><Icon n="grouped" size={16} /></button>
            <button className="h-[19px] w-[25px] bg-[#b5c8e6] text-[#8ea6cf]">A-Z</button>
            <button aria-label="Tree" className="flex h-[19px] w-[27px] items-center justify-center border border-[#d2d2d2]"><Icon n="tree" size={16} /></button>
            <label className="flex h-[19px] min-w-0 flex-1 items-center border border-[#bababa] bg-[#ebebeb] pl-1.5 pr-1">
              <input aria-label="Search" placeholder="Search" className="min-w-0 flex-1 bg-transparent italic placeholder:text-[#999]" />
              <Icon n="mag" size={13} />
            </label>
          </div>
          <div className="flex-1 bg-[#e9e9e9]" />
        </div>
      </div>
    </section>
  );
}

/* ---------- bottom bars ---------- */

function AcsBar() {
  return (
    <div className="flex h-[31px] items-stretch border-t border-[#6d6d6d] bg-[#c3c3c3]">
      <div className="flex w-[894px] items-center gap-1 bg-[#dedede] py-1 text-[10px] leading-4">
        <Grip />
        <button aria-label="Level manager" className="w-5"><Icon n="levelStack" size={20} /></button>
        <Sep />
        <Picker label="ACS" value="None" className="w-[384px]" icon={<Icon n="acs" size={13} />} />
        <div className="flex">
          <input aria-label="Rotation" disabled defaultValue="0.00°" className="h-[17px] w-[59px] border border-[#aab9cf] bg-[#dcdfe4] pl-0.5 text-[#9a9a9a]" />
          <button aria-label="Rotation list" className="flex h-[17px] w-[14px] items-center justify-center bg-[#c6c6c6] opacity-60"><Caret /></button>
        </div>
        <div className="flex w-[56px] items-center justify-between pl-0.5">
          <button aria-label="Saved"><Icon n="calendar" size={18} /></button>
          <button aria-label="Planes"><Icon n="cross" size={18} /></button>
          <Caret />
        </div>
        <Sep />
        <button aria-label="Grid"><Svg s={22}>{gridBase}</Svg></button>
        <Sep />
        <button aria-label="Grid lock" className="flex items-center gap-[3px]">
          <Svg s={22}>{gridBase}<rect x="9.500" y="10.500" width="11" height="10" fill="#eee" stroke="#888" /><path d="M12 16l2.500 3L19 12" stroke="#111" strokeWidth="2" /></Svg>
          <Caret dark />
        </button>
        <button aria-label="Grid levels" className="flex items-center gap-[3px]">
          <Svg s={22}>{gridBase}<path d="M9 13l4-2h8l-3 4h-9ZM9 17l9 0 3-3M9 20h9l3-3" fill="#b8dff3" stroke="#2b95cf" /></Svg>
          <Caret dark />
        </button>
        <Sep /><Grip />
        <button aria-label="Width"><Icon n="rect" /></button>
        <label className="flex h-[18px] w-[90px] items-center border border-[#bbb] bg-[#e8e8e8] pl-0.5">
          <input aria-label="Width value" defaultValue="0.0" className="h-[14px] w-4 bg-[#2f7fd6] text-[#b8d6f6]" />
        </label>
        <Sep />
        <button aria-label="Angle" className="pl-0.5"><Icon n="angle" /></button>
        <input aria-label="Angle value" defaultValue="0.00°" className="h-[18px] min-w-0 flex-1 border border-r-0 border-[#bbb] bg-[#e8e8e8] pl-0.5" />
      </div>
    </div>
  );
}

function StatusBar() {
  return (
    <footer className="flex h-6 items-center bg-[#e2e2e2] py-0.5 text-[10px] leading-4">
      <p className="ml-px w-[298px] shrink-0 whitespace-nowrap">Subtract Solids &gt; Select solid or surface to subtract/(Ctrl + Data t</p>
      <div className="ml-1.5 flex items-center gap-1 self-stretch"><Grip /><Sep /></div>
      <span className="mx-1.5"><Icon n="infoDrop" /></span>
      <Sep />
      <p className="w-[440px] shrink-0 whitespace-nowrap pl-0.5">Structural Element \ Shape, Level: S-BEAM-CONC (Beams: concrete)</p>
      <Sep />
      <span className="mx-1.5"><Icon n="snapNode" /></span>
      <Sep />
      <span className="mx-1.5"><Icon n="padlock" size={13} /></span>
      <Sep />
      <p className="flex-1 whitespace-nowrap pl-0.5">S-BEAM-CONC</p>
      <Sep />
      <span className="mx-1.5"><Icon n="doc" size={12} /></span>
    </footer>
  );
}

export default function App() {
  return (
    <div className="flex min-h-screen font-['Open_Sans','Noto_Sans',sans-serif] text-[#3f3f3f]">
      <main className="relative flex min-w-0 flex-1 flex-col bg-[#dcdcdc]">
        <div className="h-1 shrink-0 border-b-2 border-[#2c568f] bg-[#dfe6ee]" />
        <svg width="12" height="12" viewBox="0 0 12 12" className="absolute right-[122px] top-[-4px]" aria-hidden="true">
          <path d="M0 0H8V4L11 8 8 11 5 6Z" fill="#1d2c44" />
        </svg>
        <TitleBar />
        <TabBar />
        <Ribbon />
        <AttributesBar />
        <div className="flex flex-1 gap-1 bg-[#b9bcc0]">
          <MainView />
          <div className="flex min-w-0 flex-[394] flex-col">
            <SideView name="View 2" size="flex-[228]" bar="h-[26px] pr-1 pt-1.5" />
            <SideView name="View 4" size="flex-[206]" bar="h-[22px] pr-0.5" />
          </div>
        </div>
        <AcsBar />
        <StatusBar />
        <div className="flex h-[72px] items-center justify-center bg-linear-to-r from-[#0b1d3e] via-[#0a4282] via-70% to-[#0a2850]">
          <p className="pt-6 font-[Roboto] text-[26px] font-bold leading-8 text-white [text-shadow:-2px_0_1px_#000,2px_0_1px_#000,0_-2px_1px_#000,0_2px_1px_#000,1px_2px_2px_#000]">Outra vez.</p>
        </div>
        <SubtractSolids />
        <PropertyPanel />
      </main>
      <div className="w-1 shrink-0 bg-[linear-gradient(#0b0d0d_0_12%,#b79db0_13%_15%,#2a1a20_18%,#c9a8bb_21%,#181014_24%,#7a3a55_30%,#0f2a24_36%,#0c1c18_50%,#5a2430_53%,#14302a_60%,#d8a4b4_66%,#e0d8dc_69%,#2a1a20_72%,#6a4a5a_82%,#e0b8c0_88%,#14382e_92%,#4a2018_96%,#0c0c0c)]" />
    </div>
  );
}
